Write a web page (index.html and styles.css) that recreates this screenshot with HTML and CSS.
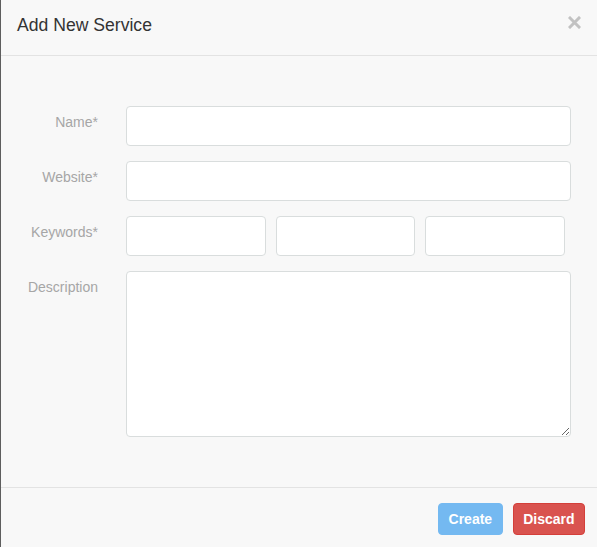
FILE: index.html
```html
<!DOCTYPE html>
<html>
<head>
<meta charset="utf-8">
<link rel="stylesheet" href="styles.css">
</head>
<body>
<div class="modal">
  <div class="modal-header">
    <h4 class="modal-title">Add New Service</h4>
    <button class="close" type="button" aria-label="Close">
      <svg width="13" height="13" viewBox="0 0 13 13"><path d="M2 2 L11 11 M11 2 L2 11" stroke="currentColor" stroke-width="3" stroke-linecap="square"/></svg>
    </button>
  </div>
  <form class="modal-body">
    <div class="row">
      <label class="label">Name*</label>
      <input class="control" type="text">
    </div>
    <div class="row">
      <label class="label">Website*</label>
      <input class="control" type="text">
    </div>
    <div class="row">
      <label class="label">Keywords*</label>
      <div class="keywords">
        <input class="control" type="text">
        <input class="control" type="text">
        <input class="control" type="text">
      </div>
    </div>
    <div class="row">
      <label class="label">Description</label>
      <textarea class="control area"></textarea>
    </div>
  </form>
  <div class="modal-footer">
    <button class="btn btn-create" type="button">Create</button>
    <button class="btn btn-discard" type="button">Discard</button>
  </div>
</div>
</body>
</html>
```
FILE: styles.css
```css
html, body {
  margin: 0;
  padding: 0;
  height: 100%;
}
body {
  background: #f8f8f8;
  font-family: "Liberation Sans", Arial, sans-serif;
  font-size: 14px;
  color: #333;
}
.modal {
  min-height: 547px;
  border-left: 1px solid #5e5e5e;
  box-sizing: border-box;
  background: #f8f8f8;
}
.modal-header {
  height: 56px;
  box-sizing: border-box;
  padding: 12px 16px 0 16px;
  border-bottom: 1px solid #e3e3e3;
  display: flex;
  justify-content: space-between;
  align-items: flex-start;
}
.modal-title {
  margin: 0;
  font-size: 17.6px;
  line-height: 26px;
  font-weight: normal;
  color: #333;
}
.close {
  margin-top: 4px;
  padding: 0;
  border: 0;
  background: none;
  color: #c2c2c2;
  line-height: 0;
  cursor: pointer;
}
.modal-body {
  margin: 0;
  padding: 50px 26px 50px 0;
  display: flex;
  flex-direction: column;
  gap: 15px;
}
.row {
  display: grid;
  grid-template-columns: 97px 1fr;
  column-gap: 28px;
}
.label {
  text-align: right;
  color: #a6a6a6;
  padding-top: 6px;
  line-height: 20px;
  white-space: nowrap;
}
.control {
  display: block;
  box-sizing: border-box;
  width: 100%;
  height: 40px;
  margin: 0;
  padding: 6px 12px;
  border: 1px solid #d9dddd;
  border-radius: 4px;
  background: #fff;
  font: inherit;
}
.area {
  height: 166px;
  resize: vertical;
}
.keywords {
  display: grid;
  grid-template-columns: 140px 139px 140px;
  column-gap: 10px;
}
.modal-footer {
  border-top: 1px solid #e3e3e3;
  padding: 15px 12px 12px 0;
  display: flex;
  justify-content: flex-end;
  gap: 10px;
}
.btn {
  height: 32px;
  box-sizing: border-box;
  padding: 0 9.5px;
  border-radius: 4px;
  font-family: inherit;
  font-size: 14px;
  font-weight: bold;
  color: #fff;
  line-height: 30px;
  cursor: pointer;
}
.btn-create {
  background: #74b9f1;
  border: 1px solid #74b9f1;
}
.btn-discard {
  background: #d9534f;
  border: 1px solid #d43f3a;
}
```
